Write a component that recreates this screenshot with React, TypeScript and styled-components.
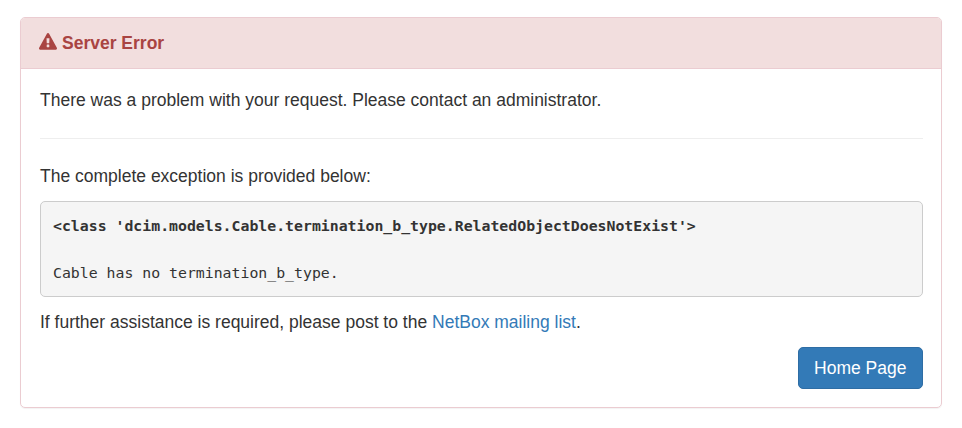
import React from 'react';
import styled, { createGlobalStyle } from 'styled-components';

const GlobalStyle = createGlobalStyle`
  html, body {
    margin: 0;
    padding: 0;
    background: #fff;
  }
  * {
    box-sizing: border-box;
  }
  body {
    font-family: "Liberation Sans", Arial, sans-serif;
    font-size: 17.5px;
    line-height: 22.8px;
    color: #333;
  }
`;

const Page = styled.div`
  width: 962px;
  height: 428px;
  padding: 17px 20px 0;
`;

const Panel = styled.section`
  border: 1px solid #ebccd1;
  border-radius: 5px;
  box-shadow: 0 1px 1px rgba(0, 0, 0, 0.05);
  height: 391px;
`;

const PanelHeading = styled.div`
  height: 51px;
  padding: 14px 18px;
  background: #f2dede;
  border-bottom: 1px solid #ebccd1;
  border-radius: 4px 4px 0 0;
  color: #a94442;
  font-weight: 700;
  display: flex;
  align-items: center;
  gap: 5px;
`;

const WarningIcon = styled.svg`
  width: 18px;
  height: 18px;
  margin-bottom: 2px;
  fill: currentColor;
`;

const PanelBody = styled.div`
  padding: 20px 18px 20px 19px;
`;

const Text = styled.p`
  margin: 0 0 13px;
`;

const Rule = styled.hr`
  border: 0;
  border-top: 1px solid #eee;
  margin: 26px 0 26px;
`;

const Exception = styled.pre`
  margin: 0 0 14px;
  padding: 12px 12px;
  height: 96px;
  background: #f5f5f5;
  border: 1px solid #ccc;
  border-radius: 5px;
  font-family: "DejaVu Sans Mono", monospace;
  font-size: 14.83px;
  line-height: 23.8px;
  color: #333;
`;

const ExceptionName = styled.strong`
  font-weight: 700;
`;

const MailLink = styled.a`
  color: #337ab7;
  text-decoration: none;
`;

const Actions = styled.div`
  display: flex;
  justify-content: flex-end;
  margin-top: 14px;
`;

const HomeButton = styled.a`
  display: inline-block;
  height: 42px;
  padding: 8px 15.5px;
  background: #337ab7;
  border: 1px solid #2e6da4;
  border-radius: 5px;
  color: #fff;
  font-size: 17.5px;
  line-height: 24px;
  text-decoration: none;
`;

export default function App() {
  return (
    <>
      <GlobalStyle />
      <Page>
        <Panel>
          <PanelHeading>
            <WarningIcon viewBox="0 0 1792 1792" aria-hidden="true">
              <path d="M1024 1375v-190q0-14-9.500-23.500t-22.500-9.500h-192q-13 0-22.500 9.500t-9.500 23.500v190q0 14 9.500 23.500t22.500 9.500h192q13 0 22.500-9.500t9.500-23.500zm-2-374l18-459q0-12-10-19-13-11-24-11h-220q-11 0-24 11-10 7-10 21l17 457q0 10 10 16.500t24 6.500h185q14 0 23.500-6.500t10.500-16.500zm-14-934l768 1408q35 63-2 126-17 29-46.500 46t-63.500 17h-1536q-34 0-63.500-17t-46.500-46q-37-63-2-126l768-1408q17-31 47-49t65-18 65 18 47 49z" />
            </WarningIcon>
            Server Error
          </PanelHeading>
          <PanelBody>
            <Text>There was a problem with your request. Please contact an administrator.</Text>
            <Rule />
            <Text>The complete exception is provided below:</Text>
            <Exception>
              <ExceptionName>&lt;class 'dcim.models.Cable.termination_b_type.RelatedObjectDoesNotExist'&gt;</ExceptionName>
              {'\n\nCable has no termination_b_type.'}
            </Exception>
            <Text>
              If further assistance is required, please post to the <MailLink href="#">NetBox mailing list</MailLink>.
            </Text>
            <Actions>
              <HomeButton href="#">Home Page</HomeButton>
            </Actions>
          </PanelBody>
        </Panel>
      </Page>
    </>
  );
}
